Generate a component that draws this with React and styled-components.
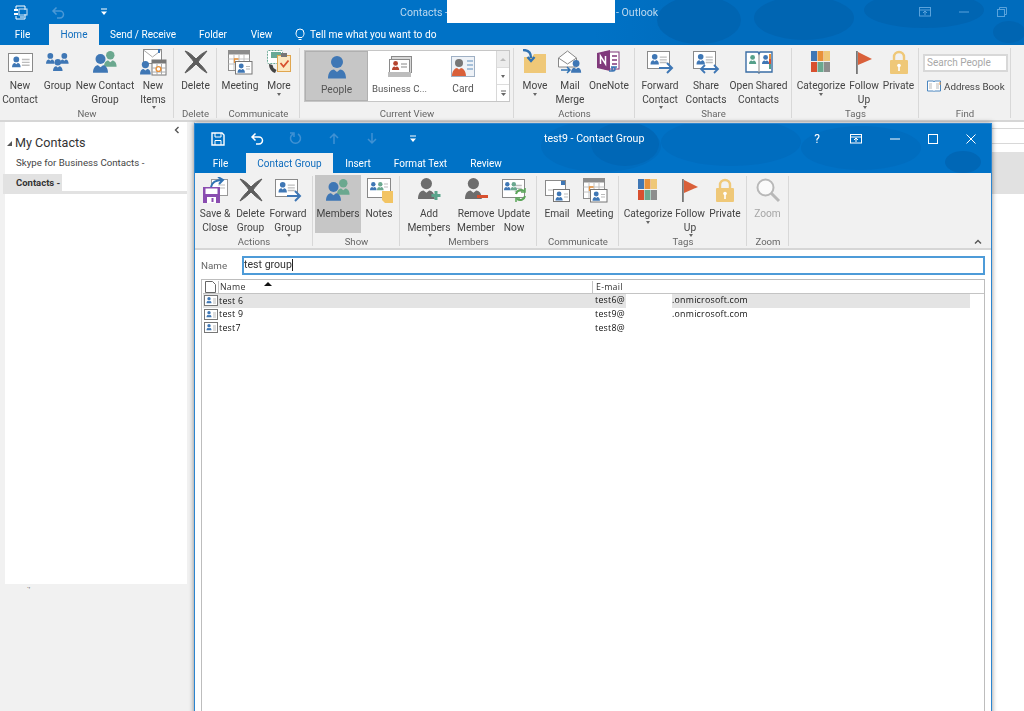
import React from "react";
import styled, { createGlobalStyle } from "styled-components";

const Global = createGlobalStyle`
  html, body { margin: 0; padding: 0; background: #fff; }
  body { font-family: Roboto, "Open Sans", "Liberation Sans", sans-serif; overflow: hidden; }
`;

const Page = styled.div`
  position: relative;
  width: 1024px;
  height: 711px;
  overflow: hidden;
  display: flex;
  flex-direction: column;
  filter: blur(0.35px);
`;

/* ---------- title bars ---------- */

const Head = styled.div`
  position: relative;
  background: #0072c6;
  color: #fff;
  flex: none;
`;

const Clouds = styled.svg`
  position: absolute;
  top: 0;
  right: 0;
  pointer-events: none;
`;

const TitleRow = styled.div`
  position: relative;
  height: ${(p) => p.$h}px;
  display: flex;
  align-items: center;
`;

const Qat = styled.div`
  display: flex;
  align-items: center;
  width: ${(p) => p.$w}px;
  padding-left: ${(p) => p.$pad}px;
  gap: ${(p) => p.$gap}px;
  box-sizing: border-box;
  flex: none;
`;

const MenuSlot = styled.div`
  display: flex;
  margin-left: ${(p) => p.$ml}px;
`;

const TitleText = styled.div`
  font-size: 10.6px;
  color: ${(p) => p.$color};
  width: ${(p) => p.$w}px;
  text-align: ${(p) => p.$align || "left"};
  flex: none;
  white-space: nowrap;
`;

const Redact = styled.div`
  width: 168px;
  height: 23px;
  background: #fff;
  flex: none;
  align-self: flex-start;
  margin: 0 1px 0 6px;
`;

const WinBtns = styled.div`
  margin-left: auto;
  display: flex;
  align-items: center;
  gap: ${(p) => p.$gap}px;
  padding-right: ${(p) => p.$pad}px;
`;

const Tabs = styled.div`
  position: relative;
  display: flex;
  height: ${(p) => p.$h}px;
`;

const Tab = styled.div`
  width: ${(p) => p.$w}px;
  flex: none;
  box-sizing: border-box;
  padding-right: ${(p) => p.$shift || 0}px;
  display: flex;
  align-items: center;
  justify-content: center;
  font-size: 10px;
  white-space: nowrap;
  color: ${(p) => (p.$on ? "#0f6cbd" : "#fff")};
  background: ${(p) => (p.$on ? "#f1f1f1" : "transparent")};
`;

const TellMe = styled.div`
  display: flex;
  align-items: center;
  gap: 5px;
  padding-left: 11px;
  font-size: 10.2px;
  white-space: nowrap;
`;

/* ---------- ribbon ---------- */

const Ribbon = styled.div`
  position: relative;
  display: flex;
  height: ${(p) => p.$h}px;
  background: #f1f1f1;
  border-bottom: 2px solid #d6d6d6;
  flex: none;
`;

const Group = styled.div`
  width: ${(p) => p.$w}px;
  flex: none;
  box-sizing: border-box;
  display: flex;
  flex-direction: column;
  position: relative;
  &::after {
    content: "";
    position: absolute;
    right: 0;
    top: 3px;
    bottom: 2px;
    width: 1px;
    background: #d8d8d8;
  }
`;

const Items = styled.div`
  flex: 1 1 0;
  min-height: 0;
  display: flex;
  padding-top: ${(p) => p.$top ?? 2}px;
  padding-left: ${(p) => p.$left || 0}px;
`;

const GroupLabel = styled.div`
  height: 12px;
  flex: none;
  font-size: 9.6px;
  line-height: 12px;
  text-align: center;
  color: #666;
  white-space: nowrap;
`;

const Item = styled.div`
  width: ${(p) => p.$w}px;
  flex: none;
  display: flex;
  flex-direction: column;
  align-items: center;
  color: ${(p) => (p.$off ? "#a6a6a6" : "#444")};
  background: ${(p) => (p.$on ? "#c6c6c6" : "transparent")};
  font-size: 10.2px;
  line-height: 13.5px;
  text-align: center;
  white-space: nowrap;
  height: ${(p) => (p.$on ? "58px" : "auto")};
`;

const IconBox = styled.div`
  flex: none;
  height: 30px;
  margin-bottom: 2px;
  display: flex;
  align-items: center;
  justify-content: center;
`;

const Caret = styled.span`
  display: inline-block;
  width: 0;
  height: 0;
  border-left: 2.5px solid transparent;
  border-right: 2.5px solid transparent;
  border-top: 3px solid #666;
  vertical-align: middle;
  margin-left: ${(p) => (p.$inline ? 1 : 0)}px;
`;

/* current view gallery */

const Gallery = styled.div`
  margin: 5px 0 0 4px;
  width: 204px;
  height: 50px;
  border: 1px solid #c6c6c6;
  background: #fff;
  display: flex;
  flex: none;
`;

const ViewItem = styled.div`
  width: ${(p) => p.$w}px;
  flex: none;
  display: flex;
  flex-direction: column;
  align-items: center;
  font-size: ${(p) => p.$size || 10.2}px;
  line-height: 13px;
  color: #555;
  background: ${(p) => (p.$on ? "#c6c6c6" : "transparent")};
  border: ${(p) => (p.$on ? "1px solid #b0b0b0" : "none")};
  box-sizing: border-box;
  white-space: nowrap;
`;

const ViewIcon = styled.div`
  height: 31px;
  display: flex;
  align-items: center;
  justify-content: center;
`;

const Scroller = styled.div`
  margin-left: auto;
  width: 12px;
  display: flex;
  flex-direction: column;
  border-left: 1px solid #d8d8d8;
  background: #f4f4f4;
`;

const ScrollBtn = styled.div`
  flex: 1;
  display: flex;
  align-items: center;
  justify-content: center;
  border-bottom: 1px solid #ddd;
  background: ${(p) => (p.$dim ? "#ececec" : "#fff")};
  &:last-child { border-bottom: none; }
`;

/* find group */

const FindCol = styled.div`
  flex: 1 1 0;
  min-height: 0;
  display: flex;
  flex-direction: column;
  padding: 9px 0 0 4px;
`;

const SearchBox = styled.div`
  width: 85px;
  height: 18px;
  flex: none;
  box-sizing: border-box;
  background: #fff;
  border: 2px solid #d8d8d8;
  color: #a8a8a8;
  font-size: 10px;
  line-height: 14px;
  padding-left: 2px;
  white-space: nowrap;
`;

const BookRow = styled.div`
  display: flex;
  align-items: center;
  gap: 3px;
  margin: 8px 0 0 4px;
  font-size: 9.8px;
  color: #444;
  white-space: nowrap;
`;

const Collapse = styled.svg`
  position: absolute;
  right: 9px;
  bottom: 2px;
`;

/* ---------- lower part of the main window ---------- */

const Body = styled.div`
  flex: 1;
  display: flex;
  min-height: 0;
`;

const Folders = styled.div`
  width: 195px;
  flex: none;
  box-sizing: border-box;
  background: #f1f1f1;
  border-right: 1px solid #dcdcdc;
  display: flex;
  flex-direction: column;
  padding-left: 5px;
`;

const FolderList = styled.div`
  position: relative;
  width: 182px;
  height: 462px;
  background: #fff;
  flex: none;
`;

const CollapseBtn = styled.svg`
  position: absolute;
  top: 4px;
  left: 168px;
`;

const MyContacts = styled.div`
  display: flex;
  align-items: center;
  gap: 2px;
  padding: 13px 0 0 1px;
  height: 16px;
  font-size: 12.6px;
  line-height: 16px;
  color: #333;
`;

const Tri = styled.span`
  width: 0;
  height: 0;
  border-bottom: 5px solid #555;
  border-left: 5px solid transparent;
  margin-left: 1px;
  margin-right: 1px;
`;

const FolderRow = styled.div`
  padding: 5px 0 0 11px;
  font-size: 9.7px;
  line-height: 14px;
  color: #444;
  white-space: nowrap;
`;

const ActiveRow = styled.div`
  margin: 4px 0 0 -2px;
  height: 20px;
  border-bottom: 3px solid #e2e2e2;
  box-sizing: border-box;
`;

const ActiveLabel = styled.div`
  width: 59px;
  height: 17px;
  background: #e2e2e2;
  box-sizing: border-box;
  padding-left: 13px;
  font-size: 9.5px;
  font-weight: 700;
  line-height: 18px;
  color: #333;
  white-space: nowrap;
`;

const Specks = styled.div`
  font-size: 7px;
  line-height: 4px;
  color: #666;
  padding-left: 22px;
`;

const BackPanel = styled.div`
  flex: 1;
  display: flex;
  flex-direction: column;
`;

const BackSearch = styled.div`
  height: 14px;
  margin-top: 6px;
  background: #fff;
  border-top: 1px solid #d8d8d8;
  border-bottom: 1px solid #d8d8d8;
`;

const BackBand = styled.div`
  height: 42px;
  margin-top: 8px;
  background: #e1e1e1;
`;

/* ---------- floating contact group window ---------- */

const Win = styled.div`
  position: absolute;
  left: 194px;
  top: 123px;
  width: 798px;
  height: 600px;
  box-sizing: border-box;
  background: #fff;
  border: 1px solid #2b85d0;
  box-shadow: 0 0 5px rgba(0, 0, 0, 0.45);
  display: flex;
  flex-direction: column;
`;

const NameRow = styled.div`
  display: flex;
  align-items: center;
  height: 27px;
  padding: 3px 6px 0 6px;
  box-sizing: border-box;
  flex: none;
`;

const NameLabel = styled.div`
  width: 41px;
  flex: none;
  font-size: 9.8px;
  color: #666;
`;

const NameInput = styled.div`
  flex: 1;
  height: 19px;
  box-sizing: border-box;
  border: 2px solid #4d9bd8;
  font-size: 10.6px;
  line-height: 14px;
  color: #333;
  display: flex;
  align-items: center;
`;

const Cursor = styled.span`
  width: 1px;
  height: 12px;
  background: #222;
`;

const ListBox = styled.div`
  flex: 1;
  margin: 2px 6px 0 6px;
  border: 1px solid #bdbdbd;
  border-bottom: none;
  padding: 1px 1px 0 1px;
  min-height: 0;
`;

const Row = styled.div`
  display: flex;
  align-items: center;
  height: 13.5px;
  width: 767px;
  font-family: "Open Sans", sans-serif;
  font-size: 8.8px;
  letter-spacing: 0.25px;
  color: #111;
  background: ${(p) => (p.$on ? "#e4e4e4" : "transparent")};
  white-space: nowrap;
`;

const HeadRow = styled(Row)`
  height: 12px;
  width: 781px;
  border-bottom: 1px solid #c4c4c4;
  color: #333;
`;

const CellIcon = styled.div`
  width: 15px;
  flex: none;
  display: flex;
  justify-content: center;
`;

const CellName = styled.div`
  width: 374px;
  flex: none;
  position: relative;
  padding-left: 1px;
  box-sizing: border-box;
  border-left: ${(p) => (p.$head ? "1px solid #c4c4c4" : "none")};
`;

const SortMark = styled.span`
  position: absolute;
  left: 45px;
  top: 1px;
  width: 0;
  height: 0;
  border-left: 4px solid transparent;
  border-right: 4px solid transparent;
  border-bottom: 4px solid #111;
`;

const CellMail = styled.div`
  display: flex;
  padding-left: 3px;
  border-left: ${(p) => (p.$head ? "1px solid #c4c4c4" : "none")};
`;

const MailUser = styled.span`
  width: 31px;
  flex: none;
`;

const Gap = styled.span`
  width: 46px;
  height: 13.5px;
  flex: none;
  background: #fff;
`;

const Help = styled.span`
  font-size: 12px;
  line-height: 12px;
  width: 10px;
  text-align: center;
  color: #fff;
`;

/* ---------- icons ---------- */

const Svg = ({ w = 28, h = 28, vb, children }) => (
  <svg width={w} height={h} viewBox={vb || `0 0 ${w} ${h}`} fill="none">
    {children}
  </svg>
);

const Person = ({ x, y, s = 1, c = "#3f77b5" }) => (
  <g transform={`translate(${x} ${y}) scale(${s})`} fill={c}>
    <circle cx="6" cy="4" r="4" />
    <path d="M0 15c0-4 2-6 4-6l2 1.600L8 9c2 0 4 2 4 6z" />
  </g>
);

const Card = ({ x = 0, y = 0, w = 24, h = 18, stroke = "#8a8a8a" }) => (
  <g>
    <rect x={x + 0.5} y={y + 0.5} width={w} height={h} fill="#fff" stroke={stroke} />
    <path
      d={`M${x + w * 0.58} ${y + h * 0.36}h${w * 0.32}M${x + w * 0.58} ${y + h * 0.52}h${w * 0.32}M${x + w * 0.58} ${y + h * 0.68}h${w * 0.32}`}
      stroke="#bdbdbd"
      strokeWidth="1.400"
    />
  </g>
);

const NewContactIcon = () => (
  <Svg w={26} h={22}>
    <Card x={1} y={2} />
    <Person x={5} y={5.500} s={0.72} />
  </Svg>
);

const GroupIcon = () => (
  <Svg w={26} h={22}>
    <Person x={1} y={2} s={0.72} />
    <Person x={15} y={2} s={0.72} />
    <Person x={8} y={8} s={0.8} />
  </Svg>
);

const TwoPeople = () => (
  <Svg w={30} h={24}>
    <Person x={14} y={1} s={1.05} c="#6ba88f" />
    <Person x={3} y={4} s={1.25} />
  </Svg>
);

const NewItemsIcon = () => (
  <Svg w={28} h={28}>
    <rect x="4.500" y="1.500" width="18" height="14" fill="#fff" stroke="#8a8a8a" />
    <path d="M4.500 2l9 7 9-7" stroke="#aaa" />
    <rect x="19" y="1" width="2" height="4" fill="#3f77b5" />
    <rect x="13" y="12" width="14" height="15" fill="#fff" stroke="#777" />
    <rect x="13" y="12" width="14" height="3.500" fill="#777" />
    <path d="M13 20h14M13 24h14M18 16v11M22.500 16v11" stroke="#aaa" />
    <circle cx="19.500" cy="21" r="2.400" stroke="#e8913a" strokeWidth="1.400" fill="#fff" />
    <Person x={1} y={13} s={0.9} />
  </Svg>
);

const DeleteIcon = () => (
  <Svg w={26} h={26}>
    <path d="M2 2c4 1 8 5 11 8 3-3 6-6 11-8-3 4-7 8-9 11 3 3 7 7 9 11-5-3-8-6-11-9-3 3-6 6-11 9 2-4 6-8 9-11C9 10 5 6 2 2z" fill="#5e5e5e" stroke="#5e5e5e" />
  </Svg>
);

const MeetingIcon = () => (
  <Svg w={26} h={26}>
    <rect x="1.500" y="1.500" width="21" height="20" fill="#fff" stroke="#8d8d8d" />
    <rect x="1.500" y="1.500" width="21" height="4" fill="#8d8d8d" />
    <path d="M1.500 10h21M1.500 15h21M7 6v15M12 6v15M17 6v15" stroke="#c2c2c2" />
    <path d="M7.500 14v-4h4" stroke="#e8913a" strokeWidth="1.300" />
    <rect x="8.500" y="12.500" width="16.500" height="12.500" fill="#fff" stroke="#777" />
    <Person x={10.500} y={14.500} s={0.62} />
    <path d="M19 17.500h4M19 20h4" stroke="#bbb" />
  </Svg>
);

const MoreIcon = () => (
  <Svg w={26} h={26}>
    <rect x="1.500" y="1.500" width="15" height="13" rx="1" fill="#fff" stroke="#6aa995" strokeDasharray="2 1" />
    <rect x="5" y="3" width="10" height="6" fill="#6aa995" />
    <path d="M3 15c0 5 3 8 6 9l1.500-3-3-2-1-3z" fill="#444" />
    <rect x="11.500" y="6.500" width="13" height="16" fill="#fbe7c0" stroke="#e0a64f" />
    <rect x="15" y="4" width="6" height="4" fill="#777" />
    <path d="M14.500 14l3 3.500 5-6" stroke="#d8502f" strokeWidth="1.800" />
  </Svg>
);

const PeopleIcon = () => (
  <Svg w={24} h={26}>
    <Person x={3} y={1} s={1.5} />
  </Svg>
);

const BusinessCardIcon = () => (
  <Svg w={26} h={24}>
    <rect x="4.500" y="1.500" width="20" height="16" fill="#d8d8d8" stroke="#8a8a8a" />
    <rect x="2.500" y="4.500" width="20" height="14" fill="#fff" stroke="#8a8a8a" />
    <Person x={5} y={6} s={0.6} c="#b5432e" />
    <path d="M14 9h6M14 12h6" stroke="#888" />
    <rect x="1" y="17" width="23" height="5" fill="#bdbdbd" />
  </Svg>
);

const CardViewIcon = () => (
  <Svg w={26} h={24}>
    <rect x="1.500" y="1.500" width="23" height="20" fill="#eef2f7" stroke="#9fb0c4" />
    <circle cx="9" cy="8" r="4" fill="#777" />
    <path d="M2 21c0-5 3-8 5-8l2 1.500 2-1.500c2 0 5 3 5 8z" fill="#d9603a" />
    <path d="M17 6h6M17 10h6M17 14h6" stroke="#8fb0d0" strokeWidth="1.500" />
  </Svg>
);

const MoveIcon = () => (
  <Svg w={26} h={26}>
    <path d="M2 8h8l2-3h12v19H2z" fill="#efc878" />
    <path d="M1 1c6 0 8 3 8 8M5.500 8l3.500 4 3.500-4" stroke="#2f72b3" strokeWidth="2.400" />
  </Svg>
);

const MailMergeIcon = () => (
  <Svg w={28} h={26}>
    <path d="M2.500 9l9-7 9 7v9h-18z" fill="#fff" stroke="#888" />
    <path d="M2.500 9l9 6 9-6" stroke="#888" />
    <Person x={15} y={11} s={0.85} />
    <path d="M5 21h9M11 18l3 3-3 3" stroke="#2f72b3" strokeWidth="1.500" />
  </Svg>
);

const OneNoteIcon = () => (
  <Svg w={26} h={26}>
    <rect x="9" y="3" width="14" height="17" fill="#fff" stroke="#80397b" />
    <path d="M1 4l13-3v21L1 19z" fill="#80397b" />
    <path d="M4.500 15V7l5 8V7" stroke="#fff" strokeWidth="1.500" />
    <path d="M16 7h5M16 11h5M16 15h5" stroke="#80397b" strokeWidth="1.500" />
    <path d="M13 22h4a2 2 0 000-4h-2M21 18h-3a2 2 0 000 4" stroke="#3f77b5" strokeWidth="1.500" />
  </Svg>
);

const ForwardIcon = () => (
  <Svg w={28} h={24}>
    <Card x={1} y={1} w={22} h={17} />
    <Person x={4.500} y={4} s={0.7} />
    <path d="M13 18h13M21 13l5 5-5 5" stroke="#3f77b5" strokeWidth="2" />
  </Svg>
);

const ShareIcon = () => (
  <Svg w={28} h={24}>
    <Card x={1} y={1} w={22} h={17} />
    <Person x={4.500} y={4} s={0.7} />
    <path d="M9 19h17M13 15l-4 4 4 4M22 15l4 4-4 4" stroke="#3f77b5" strokeWidth="1.800" />
  </Svg>
);

const BookIcon = () => (
  <Svg w={28} h={24}>
    <path d="M1 2h12l1 2 1-2h12v20H15l-1 1-1-1H1z" fill="#fff" stroke="#3a6ea5" strokeWidth="1.400" />
    <path d="M14 4v19" stroke="#888" />
    <Person x={4} y={5} s={0.6} c="#56a08a" />
    <Person x={17} y={5} s={0.6} />
    <path d="M25 4v5" stroke="#e8913a" strokeWidth="2" />
    <path d="M25 9v5" stroke="#d8502f" strokeWidth="2" />
    <path d="M25 14v5" stroke="#56a08a" strokeWidth="2" />
  </Svg>
);

const CategorizeIcon = () => (
  <Svg w={20} h={24}>
    <rect x="0" y="1" width="6" height="10" fill="#3f77b5" />
    <rect x="6.500" y="1" width="6" height="10" fill="#e8913a" />
    <rect x="13" y="1" width="6" height="10" fill="#efc878" />
    <rect x="0" y="12" width="6" height="10" fill="#d8502f" />
    <rect x="6.500" y="12" width="6" height="10" fill="#6ba88f" />
    <rect x="13" y="12" width="6" height="10" fill="#8d8d8d" />
  </Svg>
);

const FlagIcon = () => (
  <Svg w={20} h={24}>
    <rect x="2" y="1" width="1.800" height="23" fill="#777" />
    <path d="M4 2l14 7-14 6z" fill="#d9603a" />
  </Svg>
);

const LockIcon = () => (
  <Svg w={20} h={25}>
    <path d="M5 11V7a5 5 0 0110 0v4" stroke="#efc878" strokeWidth="2.400" />
    <rect x="1" y="10" width="18" height="14" rx="1" fill="#efc878" />
    <circle cx="10" cy="15.500" r="1.800" fill="#fff" />
    <rect x="9.200" y="16" width="1.600" height="5" fill="#fff" />
  </Svg>
);

const AddressBookIcon = () => (
  <Svg w={14} h={12}>
    <path d="M.5 1h6l.5 1 .5-1h6v10h-6l-.5.500-.5-.500h-6z" fill="#fff" stroke="#4a86c0" />
    <path d="M2 4h3M2 6h3M2 8h3M9 4h3M9 6h3M9 8h3" stroke="#bbb" />
    <path d="M13 2v3" stroke="#e8913a" />
  </Svg>
);

const SaveCloseIcon = () => (
  <Svg w={27} h={27}>
    <rect x="9.500" y="2.500" width="16" height="16" fill="#fff" stroke="#999" />
    <path d="M16 8h7M16 11h7" stroke="#bbb" />
    <rect x="1" y="10" width="17" height="16" fill="#8a4db0" />
    <rect x="3.500" y="11.500" width="12" height="5.500" fill="#fff" />
    <rect x="5" y="20" width="9" height="6" fill="#fff" />
    <rect x="9.500" y="21" width="2" height="4" fill="#8a4db0" />
    <path d="M9 10c1-5 5-7 11-7M16 0l5 3-4 4" stroke="#2f72b3" strokeWidth="2" />
  </Svg>
);

const NotesIcon = () => (
  <Svg w={27} h={26}>
    <rect x="1.500" y="1.500" width="23" height="19" fill="#fff" stroke="#888" />
    <Person x={4} y={5} s={0.55} />
    <Person x={11} y={5} s={0.55} c="#6ba88f" />
    <path d="M18 7h4M18 10h4" stroke="#bbb" />
    <path d="M16 14h11v12h-8l-3-3z" fill="#f2c463" />
  </Svg>
);

const MemberOpIcon = ({ kind }) => (
  <Svg w={26} h={26}>
    <Person x={2} y={1} s={1.4} c="#6d6d6d" />
    {kind === "add" ? (
      <path d="M20 14v9M15.500 18.500h9" stroke="#5aa58c" strokeWidth="3" />
    ) : (
      <rect x="14" y="18" width="11" height="3" fill="#d8502f" />
    )}
  </Svg>
);

const UpdateIcon = () => (
  <Svg w={27} h={26}>
    <Card x={1} y={2} w={22} h={18} />
    <Person x={3} y={5} s={0.55} />
    <Person x={9.500} y={5} s={0.55} c="#6ba88f" />
    <path d="M15 17a5 5 0 018-3M24 19a5 5 0 01-8 3" stroke="#5aa558" strokeWidth="2" />
    <path d="M24 11v4h-4M15 25v-4h4" stroke="#5aa558" strokeWidth="1.500" />
  </Svg>
);

const EmailIcon = () => (
  <Svg w={27} h={26}>
    <rect x="1.500" y="3.500" width="20" height="15" fill="#fff" stroke="#8a8a8a" />
    <rect x="17" y="4" width="4" height="4" fill="#3f77b5" />
    <path d="M4 13h7" stroke="#bbb" />
    <rect x="9.500" y="12.500" width="16" height="12" fill="#fff" stroke="#777" />
    <Person x={11.500} y={14.500} s={0.6} />
    <path d="M20 17h4M20 20h4" stroke="#bbb" />
  </Svg>
);

const ZoomIcon = () => (
  <Svg w={26} h={26}>
    <circle cx="10.500" cy="10.500" r="8" fill="#fafafa" stroke="#b8b8b8" strokeWidth="2" />
    <path d="M16 16l8 8" stroke="#b8b8b8" strokeWidth="3" />
  </Svg>
);

const OutlookMark = () => (
  <Svg w={15} h={15}>
    <path d="M3 1h9v4M3 1v3M12 9v5H3v-3" stroke="#fff" />
    <rect x="1" y="4" width="4" height="2" fill="#fff" />
    <rect x="1" y="8" width="4" height="2" fill="#fff" />
    <rect x="6" y="4" width="8" height="6" stroke="#cfe3f3" />
    <path d="M7 12h4" stroke="#fff" />
  </Svg>
);

const Undo = ({ dim }) => (
  <Svg w={14} h={13}>
    <path d="M3 5h6a3.500 3.500 0 010 7H6M5.500 1.500L2 5l3.500 3.500" stroke={dim ? "#4a98d6" : "#fff"} strokeWidth="1.500" />
  </Svg>
);

const Redo = () => (
  <Svg w={14} h={13}>
    <path d="M10 2a5 5 0 11-5 0M2 1h4v4" stroke="#3f91d3" strokeWidth="1.500" />
  </Svg>
);

const ArrowV = ({ down }) => (
  <Svg w={14} h={13}>
    <path d={down ? "M7 1v10M3 7l4 4 4-4" : "M7 12V2M3 6l4-4 4 4"} stroke="#3f91d3" strokeWidth="1.500" />
  </Svg>
);

const QatMenu = () => (
  <Svg w={8} h={8}>
    <path d="M1 1h6" stroke="#fff" />
    <path d="M1 3.500h6L4 7z" fill="#fff" />
  </Svg>
);

const QatDark = () => (
  <Svg w={7} h={7}>
    <path d="M1 1h5" stroke="#666" />
    <path d="M1 3h5L3.500 6z" fill="#666" />
  </Svg>
);

const SaveIcon = () => (
  <Svg w={14} h={14}>
    <path d="M1 1h10l2 2v10H1z" stroke="#fff" strokeWidth="1.400" />
    <path d="M4 1v4h6V1M4 13V8.500h6V13" stroke="#fff" />
  </Svg>
);

const RibbonMode = ({ dim }) => (
  <Svg w={12} h={10}>
    <rect x=".5" y=".5" width="11" height="8.500" stroke={dim ? "#5aa3dc" : "#fff"} />
    <path d="M.5 3h11" stroke={dim ? "#5aa3dc" : "#fff"} />
    <path d="M6 8V4M4 6l2-2 2 2" stroke={dim ? "#5aa3dc" : "#fff"} />
  </Svg>
);

const Minimize = ({ dim }) => (
  <Svg w={10} h={10}>
    <path d="M0 5h10" stroke={dim ? "#5aa3dc" : "#fff"} />
  </Svg>
);

const Maximize = () => (
  <Svg w={10} h={10}>
    <rect x=".5" y=".5" width="9" height="9" stroke="#fff" />
  </Svg>
);

const Restore = () => (
  <Svg w={10} h={10}>
    <rect x=".5" y="2.500" width="7" height="7" stroke="#5aa3dc" />
    <path d="M2.500 2.500v-2h7v7h-2" stroke="#5aa3dc" />
  </Svg>
);

const CloseX = () => (
  <Svg w={10} h={10}>
    <path d="M.5.5l9 9M9.500.5l-9 9" stroke="#fff" />
  </Svg>
);

const Bulb = () => (
  <Svg w={10} h={13}>
    <path d="M3 9.500C1.500 8 1 7 1 5a4 4 0 018 0c0 2-.5 3-2 4.500zM3.500 11.500h3" stroke="#fff" />
  </Svg>
);

const MiniCard = () => (
  <Svg w={14} h={11}>
    <rect x=".5" y=".5" width="13" height="10" fill="#fff" stroke="#777" />
    <Person x={2.500} y={2} s={0.42} />
    <path d="M9 4h3M9 6h3M9 8h3" stroke="#bbb" />
  </Svg>
);

const DocIcon = () => (
  <Svg w={11} h={12}>
    <path d="M.5.5h7l3 3v8H.5z" fill="#fff" stroke="#666" />
  </Svg>
);

const cloudsMain = (
  <Clouds width="430" height="45" viewBox="0 0 430 45">
    <defs>
      <linearGradient id="mainFade" x1="0" x2="1" y1="0" y2="0">
        <stop offset="0" stopColor="#0072c6" />
        <stop offset="0.25" stopColor="#006cbd" />
        <stop offset="1" stopColor="#006cbd" />
      </linearGradient>
    </defs>
    <rect width="430" height="45" fill="url(#mainFade)" />
    <g fill="#0065b2">
      <ellipse cx="105" cy="20" rx="42" ry="24" />
      <ellipse cx="210" cy="18" rx="50" ry="22" />
      <ellipse cx="330" cy="10" rx="60" ry="18" />
      <ellipse cx="415" cy="32" rx="16" ry="11" />
    </g>
  </Clouds>
);

const cloudsWin = (
  <Clouds width="470" height="49" viewBox="0 0 470 49">
    <g fill="#006dbf">
      <ellipse cx="80" cy="22" rx="60" ry="26" />
      <ellipse cx="210" cy="18" rx="70" ry="24" />
      <ellipse cx="340" cy="24" rx="60" ry="22" />
    </g>
    <g fill="#0067b6">
      <ellipse cx="104" cy="20" rx="34" ry="22" />
      <ellipse cx="442" cy="38" rx="18" ry="11" />
    </g>
  </Clouds>
);

const Btn = ({ w, icon, off, on, children }) => (
  <Item $w={w} $off={off} $on={on}>
    <IconBox>{icon}</IconBox>
    {children}
  </Item>
);

export default function App() {
  return (
    <>
      <Global />
      <Page>
        <Head>
          {cloudsMain}
          <TitleRow $h={24}>
            <Qat $w={400} $pad={13} $gap={23}>
              <OutlookMark />
              <Undo dim />
              <MenuSlot $ml={12}><QatMenu /></MenuSlot>
            </Qat>
            <TitleText $w={41} $color="#bcd9ef">Contacts -</TitleText>
            <Redact />
            <TitleText $w={60} $color="#bcd9ef">- Outlook</TitleText>
            <WinBtns $gap={28} $pad={17}>
              <RibbonMode dim />
              <Minimize dim />
              <Restore />
            </WinBtns>
          </TitleRow>
          <Tabs $h={21}>
            <Tab $w={49} $shift={4}>File</Tab>
            <Tab $w={50} $on>Home</Tab>
            <Tab $w={88}>Send / Receive</Tab>
            <Tab $w={52}>Folder</Tab>
            <Tab $w={45}>View</Tab>
            <TellMe><Bulb />Tell me what you want to do</TellMe>
          </Tabs>
        </Head>
        <Ribbon $h={75}>
          <Group $w={174}>
            <Items>
              <Btn w={40} icon={<NewContactIcon />}>New<br />Contact</Btn>
              <Btn w={35} icon={<GroupIcon />}>Group</Btn>
              <Btn w={60} icon={<TwoPeople />}>New Contact<br />Group</Btn>
              <Btn w={36} icon={<NewItemsIcon />}>New<br />Items <Caret $inline /></Btn>
            </Items>
            <GroupLabel>New</GroupLabel>
          </Group>
          <Group $w={43}>
            <Items>
              <Btn w={43} icon={<DeleteIcon />}>Delete</Btn>
            </Items>
            <GroupLabel>Delete</GroupLabel>
          </Group>
          <Group $w={83}>
            <Items>
              <Btn w={46} icon={<MeetingIcon />}>Meeting</Btn>
              <Btn w={32} icon={<MoreIcon />}>More<br /><Caret /></Btn>
            </Items>
            <GroupLabel>Communicate</GroupLabel>
          </Group>
          <Group $w={214}>
            <Gallery>
              <ViewItem $w={63} $on>
                <ViewIcon><PeopleIcon /></ViewIcon>
                People
              </ViewItem>
              <ViewItem $w={63} $size={9.6}>
                <ViewIcon><BusinessCardIcon /></ViewIcon>
                Business C...
              </ViewItem>
              <ViewItem $w={64}>
                <ViewIcon><CardViewIcon /></ViewIcon>
                Card
              </ViewItem>
              <Scroller>
                <ScrollBtn $dim><Svg w={6} h={4}><path d="M0 4l3-3 3 3z" fill="#bbb" /></Svg></ScrollBtn>
                <ScrollBtn><Caret /></ScrollBtn>
                <ScrollBtn><QatDark /></ScrollBtn>
              </Scroller>
            </Gallery>
            <Items $top={0} />
            <GroupLabel>Current View</GroupLabel>
          </Group>
          <Group $w={121}>
            <Items>
              <Btn w={42} icon={<MoveIcon />}>Move<br /><Caret /></Btn>
              <Btn w={28} icon={<MailMergeIcon />}>Mail<br />Merge</Btn>
              <Btn w={50} icon={<OneNoteIcon />}>OneNote</Btn>
            </Items>
            <GroupLabel>Actions</GroupLabel>
          </Group>
          <Group $w={157}>
            <Items>
              <Btn w={50} icon={<ForwardIcon />}>Forward<br />Contact <Caret $inline /></Btn>
              <Btn w={42} icon={<ShareIcon />}>Share<br />Contacts</Btn>
              <Btn w={63} icon={<BookIcon />}>Open Shared<br />Contacts</Btn>
            </Items>
            <GroupLabel>Share</GroupLabel>
          </Group>
          <Group $w={127}>
            <Items>
              <Btn w={58} icon={<CategorizeIcon />}>Categorize<br /><Caret /></Btn>
              <Btn w={28} icon={<FlagIcon />}>Follow<br />Up <Caret $inline /></Btn>
              <Btn w={41} icon={<LockIcon />}>Private</Btn>
            </Items>
            <GroupLabel>Tags</GroupLabel>
          </Group>
          <Group $w={92}>
            <FindCol>
              <SearchBox>Search People</SearchBox>
              <BookRow><AddressBookIcon />Address Book</BookRow>
            </FindCol>
            <GroupLabel>Find</GroupLabel>
          </Group>
        </Ribbon>
        <Body>
          <Folders>
            <FolderList>
              <CollapseBtn width="8" height="8" viewBox="0 0 8 8" fill="none">
                <path d="M5.500 1L2.500 4l3 3" stroke="#555" strokeWidth="1.400" />
              </CollapseBtn>
              <MyContacts><Tri />My Contacts</MyContacts>
              <FolderRow>Skype for Business Contacts -</FolderRow>
              <ActiveRow>
                <ActiveLabel>Contacts -</ActiveLabel>
              </ActiveRow>
            </FolderList>
            <Specks>.,</Specks>
          </Folders>
          <BackPanel>
            <BackSearch />
            <BackBand />
          </BackPanel>
        </Body>

        <Win>
          <Head>
            {cloudsWin}
            <TitleRow $h={29}>
              <Qat $w={349} $pad={16} $gap={24.500}>
                <SaveIcon />
                <Undo />
                <Redo />
                <ArrowV />
                <ArrowV down />
                <MenuSlot $ml={5}><QatMenu /></MenuSlot>
              </Qat>
              <TitleText $w={99} $align="center" $color="#fff">test9 - Contact Group</TitleText>
              <WinBtns $gap={28} $pad={15}>
                <Help>?</Help>
                <RibbonMode />
                <Minimize />
                <Maximize />
                <CloseX />
              </WinBtns>
            </TitleRow>
            <Tabs $h={20}>
              <Tab $w={51}>File</Tab>
              <Tab $w={87} $on>Contact Group</Tab>
              <Tab $w={50}>Insert</Tab>
              <Tab $w={75}>Format Text</Tab>
              <Tab $w={56}>Review</Tab>
            </Tabs>
          </Head>
          <Ribbon $h={75}>
            <Group $w={118}>
              <Items>
                <Btn w={40} icon={<SaveCloseIcon />}>Save &amp;<br />Close</Btn>
                <Btn w={31} icon={<DeleteIcon />}>Delete<br />Group</Btn>
                <Btn w={44} icon={<ForwardIcon />}>Forward<br />Group <Caret $inline /></Btn>
              </Items>
              <GroupLabel>Actions</GroupLabel>
            </Group>
            <Group $w={87}>
              <Items $left={2}>
                <Btn w={46} on icon={<TwoPeople />}>Members</Btn>
                <Btn w={36} icon={<NotesIcon />}>Notes</Btn>
              </Items>
              <GroupLabel>Show</GroupLabel>
            </Group>
            <Group $w={137}>
              <Items>
                <Btn w={58} icon={<MemberOpIcon kind="add" />}>Add<br />Members <Caret $inline /></Btn>
                <Btn w={36} icon={<MemberOpIcon />}>Remove<br />Member</Btn>
                <Btn w={40} icon={<UpdateIcon />}>Update<br />Now</Btn>
              </Items>
              <GroupLabel>Members</GroupLabel>
            </Group>
            <Group $w={82}>
              <Items>
                <Btn w={40} icon={<EmailIcon />}>Email</Btn>
                <Btn w={36} icon={<MeetingIcon />}>Meeting</Btn>
              </Items>
              <GroupLabel>Communicate</GroupLabel>
            </Group>
            <Group $w={128}>
              <Items>
                <Btn w={58} icon={<CategorizeIcon />}>Categorize<br /><Caret /></Btn>
                <Btn w={26} icon={<FlagIcon />}>Follow<br />Up <Caret $inline /></Btn>
                <Btn w={44} icon={<LockIcon />}>Private</Btn>
              </Items>
              <GroupLabel>Tags</GroupLabel>
            </Group>
            <Group $w={42}>
              <Items>
                <Btn w={41} off icon={<ZoomIcon />}>Zoom</Btn>
              </Items>
              <GroupLabel>Zoom</GroupLabel>
            </Group>
            <Collapse width="8" height="8" viewBox="0 0 8 8" fill="none">
              <path d="M1 5.500L4 2.500l3 3" stroke="#555" strokeWidth="1.400" />
            </Collapse>
          </Ribbon>
          <NameRow>
            <NameLabel>Name</NameLabel>
            <NameInput>test group<Cursor /></NameInput>
          </NameRow>
          <ListBox>
            <HeadRow>
              <CellIcon><DocIcon /></CellIcon>
              <CellName $head>Name<SortMark /></CellName>
              <CellMail $head>E-mail</CellMail>
            </HeadRow>
            <Row $on>
              <CellIcon><MiniCard /></CellIcon>
              <CellName>test 6</CellName>
              <CellMail><MailUser>test6@</MailUser><Gap />.onmicrosoft.com</CellMail>
            </Row>
            <Row>
              <CellIcon><MiniCard /></CellIcon>
              <CellName>test 9</CellName>
              <CellMail><MailUser>test9@</MailUser><Gap />.onmicrosoft.com</CellMail>
            </Row>
            <Row>
              <CellIcon><MiniCard /></CellIcon>
              <CellName>test7</CellName>
              <CellMail><MailUser>test8@</MailUser></CellMail>
            </Row>
          </ListBox>
        </Win>
      </Page>
    </>
  );
}
